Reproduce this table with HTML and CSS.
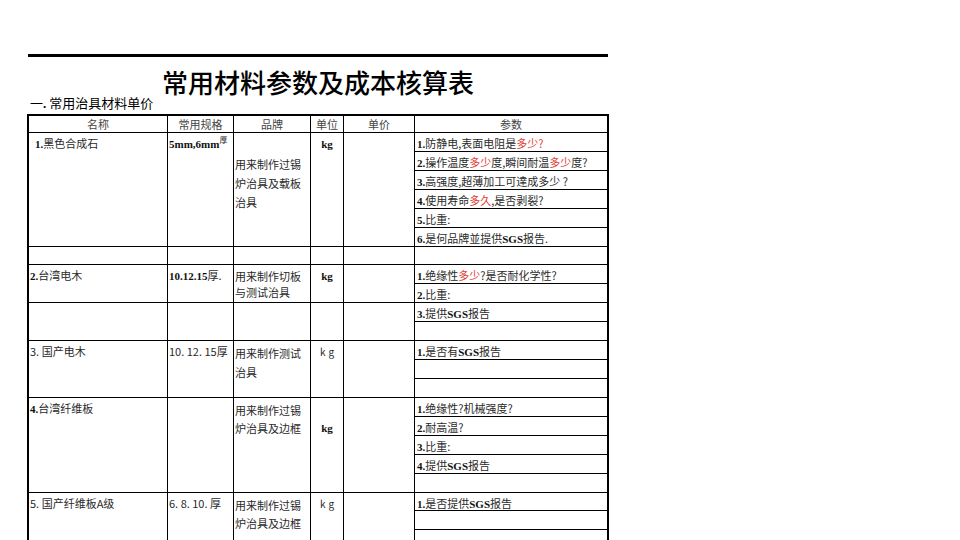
FILE: index.html
```html
<!DOCTYPE html>
<html lang="zh-CN">
<head>
<meta charset="utf-8">
<title>常用材料参数及成本核算表</title>
<link rel="stylesheet" href="styles.css">
</head>
<body>
<div class="page">
  <div class="rule"></div>
  <h1 class="title">常用材料参数及成本核算表</h1>
  <div class="subtitle">一<b>.</b> 常用治具材料单价</div>
  <div class="sheet">
    <div class="c h">名称</div>
    <div class="c h">常用规格</div>
    <div class="c h">品牌</div>
    <div class="c h">单位</div>
    <div class="c h">单价</div>
    <div class="c h p">参数</div>

    <div class="c s6 name indent"><b>1.</b>黑色合成石</div>
    <div class="c s6 spec"><b>5mm,6mm</b><span class="sup">厚</span></div>
    <div class="c s6 brand b1">用来制作过锡炉治具及载板治具</div>
    <div class="c s6 unit"><b>kg</b></div>
    <div class="c s6"></div>
    <div class="c p"><b>1.</b>防静电,表面电阻是<em>多少?</em></div>
    <div class="c p"><b>2.</b>操作温度<em>多少</em>度,瞬间耐温<em>多少</em>度?</div>
    <div class="c p"><b>3.</b>高强度,超薄加工可達成多少 ?</div>
    <div class="c p"><b>4.</b>使用寿命<em>多久</em>,是否剥裂?</div>
    <div class="c p"><b>5.</b>比重:</div>
    <div class="c p"><b>6.</b>是何品牌並提供<b>SGS</b>报告.</div>

    <div class="c"></div>
    <div class="c"></div>
    <div class="c"></div>
    <div class="c"></div>
    <div class="c"></div>
    <div class="c p"></div>

    <div class="c s2 name"><b>2.</b>台湾电木</div>
    <div class="c s2 spec"><b>10.12.15</b>厚.</div>
    <div class="c s2 brand b2">用来制作切板与测试治具</div>
    <div class="c s2 unit"><b>kg</b></div>
    <div class="c s2"></div>
    <div class="c p"><b>1.</b>绝缘性<em>多少</em>?是否耐化学性?</div>
    <div class="c p"><b>2.</b>比重:</div>

    <div class="c s2"></div>
    <div class="c s2"></div>
    <div class="c s2"></div>
    <div class="c s2"></div>
    <div class="c s2"></div>
    <div class="c p"><b>3.</b>提供<b>SGS</b>报告</div>
    <div class="c p"></div>

    <div class="c s3 name">3. 国产电木</div>
    <div class="c s3 spec">10. 12. 15厚</div>
    <div class="c s3 brand">用来制作测试治具</div>
    <div class="c s3 unit"><span class="kg">kg</span></div>
    <div class="c s3"></div>
    <div class="c p"><b>1.</b>是否有<b>SGS</b>报告</div>
    <div class="c p"></div>
    <div class="c p"></div>

    <div class="c s5 name"><b>4.</b>台湾纤维板</div>
    <div class="c s5 spec"></div>
    <div class="c s5 brand">用来制作过锡炉治具及边框</div>
    <div class="c s5 unit low"><b>kg</b></div>
    <div class="c s5"></div>
    <div class="c p"><b>1.</b>绝缘性?机械强度?</div>
    <div class="c p"><b>2.</b>耐高温?</div>
    <div class="c p"><b>3.</b>比重:</div>
    <div class="c p"><b>4.</b>提供<b>SGS</b>报告</div>
    <div class="c p"></div>

    <div class="c s3 name">5. 国产纤维板A级</div>
    <div class="c s3 spec">6. 8. 10. 厚</div>
    <div class="c s3 brand">用来制作过锡炉治具及边框</div>
    <div class="c s3 unit"><span class="kg">kg</span></div>
    <div class="c s3"></div>
    <div class="c p"><b>1.</b>是否提供<b>SGS</b>报告</div>
    <div class="c p"></div>
    <div class="c p"></div>
  </div>
</div>
</body>
</html>
```

FILE: styles.css
```css
html, body {
  margin: 0;
  padding: 0;
  background: #fff;
  height: 540px;
  overflow: hidden;
}
body {
  font-family: "Noto Sans CJK SC", "Liberation Sans", sans-serif;
  color: #2a2a2a;
}
.page {
  width: 582px;
  padding: 54px 0 0 27px;
}
.rule {
  height: 3px;
  width: 580px;
  margin-left: 1px;
  background: #000;
}
.title {
  margin: 11px 0 0;
  font-size: 26px;
  line-height: 28px;
  font-weight: 500;
  text-align: center;
  color: #000;
}
.subtitle {
  margin-left: 3px;
  font-size: 13px;
  line-height: 14px;
  color: #000;
}
.subtitle b {
  font-family: "Liberation Serif", serif;
  font-weight: bold;
}
.sheet {
  margin-top: 3px;
  display: grid;
  grid-template-columns: 139px 66px 77px 33px 71px 192px;
  grid-template-rows: 17px repeat(22, 18.93px);
  border: 2px solid #000;
  border-bottom: none;
  font-size: 11px;
}
.c {
  border-right: 1px solid #000;
  border-bottom: 1px solid #000;
  padding: 2px 2px 0;
  line-height: 17px;
  white-space: nowrap;
  min-width: 0;
}
.c b {
  font-family: "Liberation Serif", serif;
  font-weight: bold;
  font-size: 11px;
  color: #111;
}
.c em {
  font-style: normal;
  color: #e23a32;
}
.h {
  padding: 0;
  line-height: 16px;
  text-align: center;
  color: #444;
}
.p {
  border-right: none;
}
.s2 { grid-row: span 2; }
.s3 { grid-row: span 3; }
.s5 { grid-row: span 5; }
.s6 { grid-row: span 6; }
.name {
  padding-left: 1px;
}
.indent {
  padding-left: 6px;
}
.spec {
  padding-left: 1px;
}
.sup {
  display: inline-block;
  font-size: 8px;
  line-height: 8px;
  margin-left: 0;
  vertical-align: 5px;
}
.brand {
  white-space: normal;
  padding: 3px 1px 0;
  line-height: 18.5px;
}
.b1 {
  padding-top: 22px;
  line-height: 19px;
}
.b2 {
  line-height: 16px;
}
.unit {
  text-align: center;
  padding: 2px 0 0;
}
.low {
  padding-top: 21px;
}
.kg {
  letter-spacing: 3px;
  margin-right: -3px;
  font-size: 10px;
}
```
